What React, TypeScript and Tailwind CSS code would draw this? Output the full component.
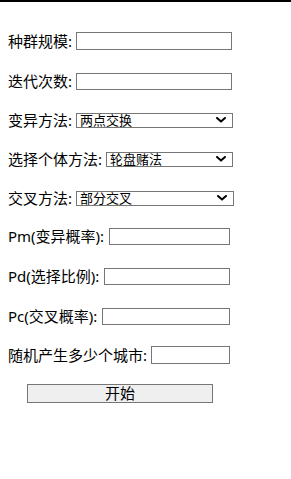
import React from 'react';

const font = "font-['Noto_Sans','Noto_Sans_CJK_SC',sans-serif]";

function Chevron() {
  return (
    <svg className="pointer-events-none absolute right-[7px] top-1/2 -translate-y-1/2" width="10" height="6" viewBox="0 0 10 6">
      <path d="M1 1 L5 4.6 L9 1" fill="none" stroke="#000" strokeWidth="2" strokeLinecap="round" strokeLinejoin="round" />
    </svg>
  );
}

function InputRow({ label, lw, w, h, mt }: { label: string; lw: string; w: string; h: string; mt: string }) {
  return (
    <div className={`flex h-[20px] items-center pl-[8px] ${mt}`}>
      <span className={`${lw} shrink-0 whitespace-nowrap text-[15px] leading-none text-black`}>{label}</span>
      <input type="text" className={`block ${w} ${h} border border-[#767676] bg-white`} />
    </div>
  );
}

function SelectRow({ label, lw, w, mt, value, options }: { label: string; lw: string; w: string; mt: string; value: string; options: string[] }) {
  return (
    <div className={`flex h-[20px] items-center pl-[8px] ${mt}`}>
      <span className={`${lw} shrink-0 whitespace-nowrap text-[15px] leading-none text-black`}>{label}</span>
      <div className={`relative ${w} h-[15px] leading-none`}>
        <select
          defaultValue={value}
          className="block h-[15px] w-full appearance-none border border-[#767676] bg-white py-0 pl-[3px] text-[13px] leading-[13px] text-black"
        >
          {options.map(o => <option key={o}>{o}</option>)}
        </select>
        <Chevron />
      </div>
    </div>
  );
}

export default function App() {
  return (
    <div className={`min-h-[479px] w-[291px] border-t-2 border-black bg-white ${font}`}>
      <InputRow label="种群规模:" lw="w-[68px]" w="w-[156px]" h="h-[18px]" mt="mt-[29px]" />
      <InputRow label="迭代次数:" lw="w-[68px]" w="w-[156px]" h="h-[17px]" mt="mt-[20px]" />
      <SelectRow label="变异方法:" lw="w-[68px]" w="w-[157px]" mt="mt-[19px]" value="两点交换" options={['两点交换', '单点变异', '逆转变异']} />
      <SelectRow label="选择个体方法:" lw="w-[98px]" w="w-[127px]" mt="mt-[19px]" value="轮盘赌法" options={['轮盘赌法', '锦标赛法']} />
      <SelectRow label="交叉方法:" lw="w-[68px]" w="w-[158px]" mt="mt-[19px]" value="部分交叉" options={['部分交叉', '顺序交叉', '循环交叉']} />
      <InputRow label="Pm(变异概率):" lw="w-[101px]" w="w-[121px]" h="h-[17px]" mt="mt-[18px]" />
      <InputRow label="Pd(选择比例):" lw="w-[96px]" w="w-[126px]" h="h-[17px]" mt="mt-[20px]" />
      <InputRow label="Pc(交叉概率):" lw="w-[94px]" w="w-[128px]" h="h-[17px]" mt="mt-[20px]" />
      <InputRow label="随机产生多少个城市:" lw="w-[143px]" w="w-[79px]" h="h-[18px]" mt="mt-[19px]" />
      <div className="mt-[18px] flex h-[20px] items-center pl-[27px]">
        <button className="block h-[19px] w-[186px] border border-[#767676] bg-[#efefef] text-[15px] leading-none text-black">
          开始
        </button>
      </div>
    </div>
  );
}
